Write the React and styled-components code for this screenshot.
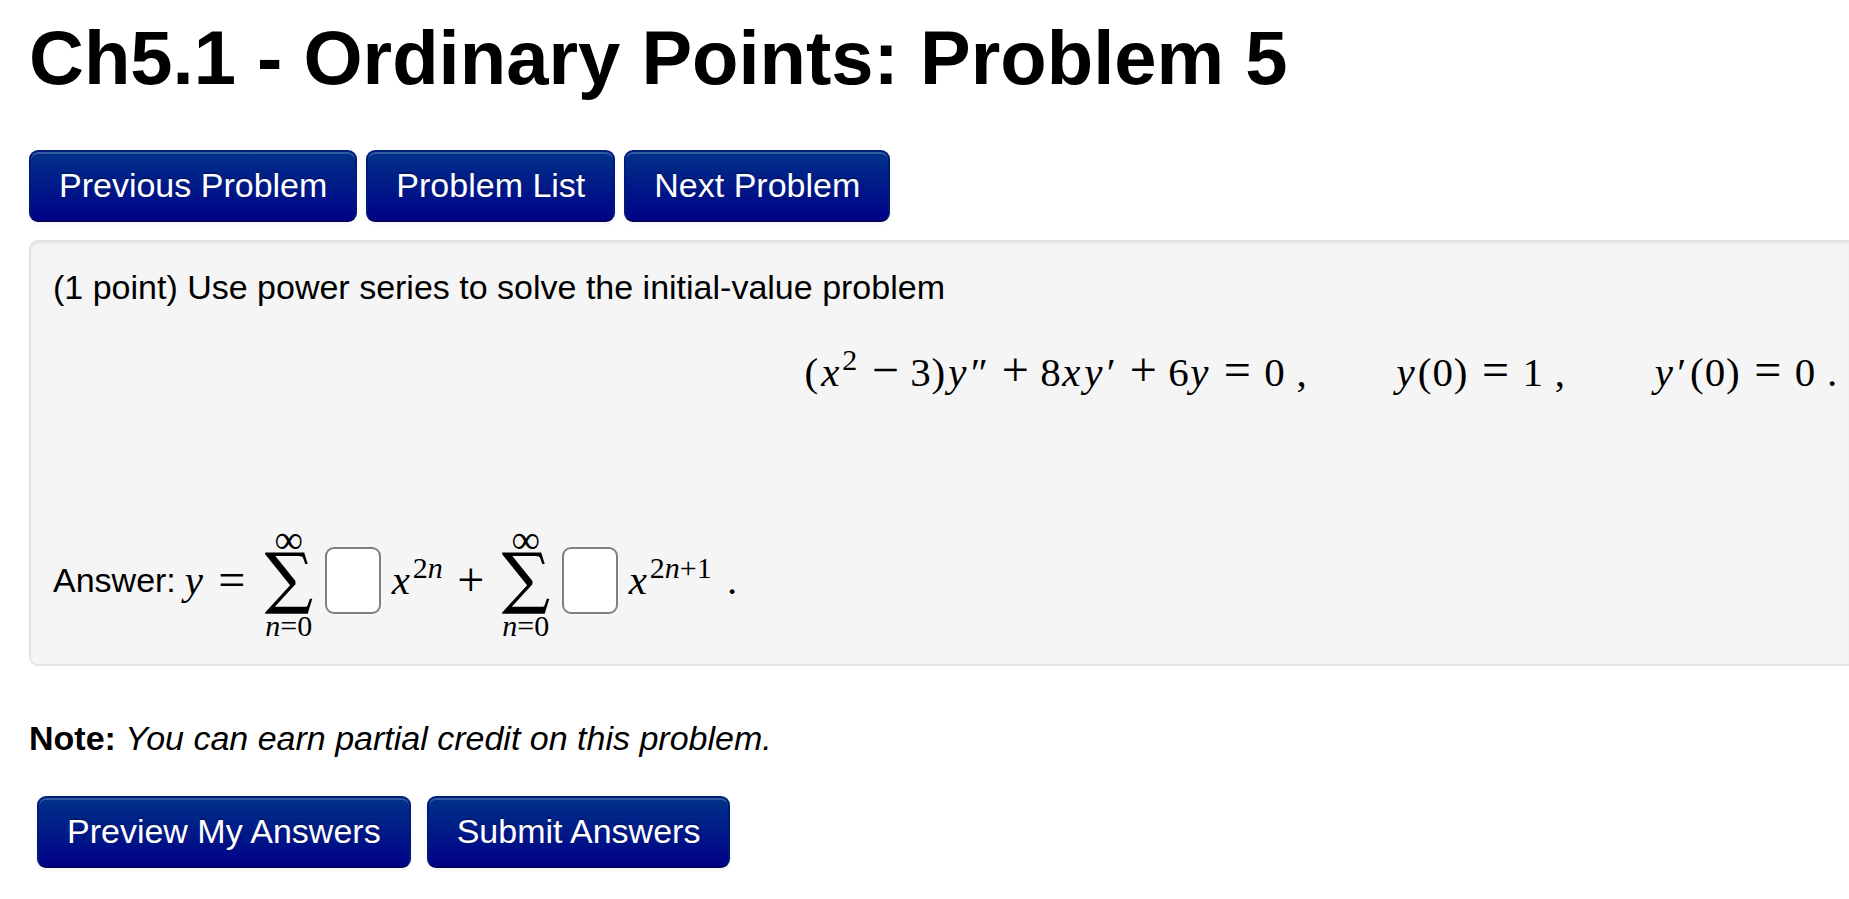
import React from "react";
import styled, { createGlobalStyle } from "styled-components";

const GlobalStyle = createGlobalStyle`
  * { box-sizing: border-box; }
  body {
    margin: 0;
    background: #fff;
    color: #000;
    font-family: "Liberation Sans", Arial, sans-serif;
    font-size: 34px;
    line-height: 48px;
    overflow-x: hidden;
  }
`;

const Page = styled.main`
  padding: 10px 0 32px 29px;
`;

const Title = styled.h1`
  margin: 0 0 44px;
  font-size: 76px;
  line-height: 96px;
  font-weight: 700;
`;

const ButtonRow = styled.div`
  display: flex;
  gap: ${(p) => p.$gap}px;
  padding-left: ${(p) => p.$indent || 0}px;
`;

const Button = styled.button`
  height: 72px;
  padding: 0 28px 2px;
  border: 2px solid;
  border-color: #00207c #001a78 #00005c;
  border-radius: 9px;
  background: linear-gradient(to bottom, #003388, #000088) border-box;
  box-shadow: inset 0 2px 0 rgba(255, 255, 255, 0.2), 0 2px 4px rgba(0, 0, 0, 0.05);
  color: #fff;
  font: inherit;
  text-shadow: 0 -2px 0 rgba(0, 0, 0, 0.25);
  white-space: nowrap;
`;

const Panel = styled.section`
  margin: 18px 0 48px;
  padding: 21px 10px 26px 22px;
  border: 2px solid #e3e3e3;
  border-right: 0;
  border-radius: 9px 0 0 9px;
  background: #f5f5f5;
  box-shadow: inset 0 2px 2px rgba(0, 0, 0, 0.05);
`;

const Text = styled.p`
  margin: 0;
`;

const MathRow = styled.div`
  display: flex;
  align-items: baseline;
  font-family: "Liberation Serif", "Times New Roman", serif;
  font-size: 41px;
  line-height: 48px;
  white-space: nowrap;
`;

const Equation = styled(MathRow)`
  justify-content: flex-end;
  margin: 35px 0 126px;
`;

const Group = styled.span`
  display: flex;
  align-items: baseline;
  margin-right: ${(p) => p.$after || 0}px;
`;

const widths = { digit: 20, paren: 16, variable: 22, mark: 14 };

const Sym = styled.span`
  display: inline-block;
  width: ${(p) => widths[p.$kind]}px;
  text-align: center;
  font-style: ${(p) => (p.$kind === "variable" ? "italic" : "normal")};
`;

const Operator = styled.span`
  width: 32px;
  margin: 0 ${(p) => (p.$rel ? 11 : 9)}px;
  text-align: center;
  font-size: 48px;
`;

const Sup = styled.sup`
  margin: 0 3px 0 1px;
  font-size: 30px;
  line-height: 24px;
  vertical-align: 16px;
`;

const Prime = styled.span`
  margin-right: 5px;
  font-style: italic;
`;

const AnswerRow = styled(MathRow)`
  align-items: center;
`;

const AnswerLabel = styled.label`
  margin-right: 7px;
  font-family: "Liberation Sans", Arial, sans-serif;
  font-size: 34px;
`;

const Sum = styled.span`
  display: flex;
  flex-direction: column;
  align-items: center;
  width: 60px;
  margin-right: 6px;
  padding-top: 8px;
`;

const Limit = styled.span`
  font-size: ${(p) => (p.$top ? 40 : 30)}px;
  line-height: ${(p) => (p.$top ? 20 : 24)}px;
`;

const SumSign = styled.span`
  font-family: "DejaVu Math TeX Gyre", "Liberation Serif", serif;
  font-size: 58px;
  line-height: 64px;
`;

const AnswerInput = styled.input`
  width: 56px;
  height: 67px;
  margin-right: 9px;
  padding: 4px 8px;
  border: 2px solid #808080;
  border-radius: 9px;
  background: #fff;
  font: 34px "Liberation Sans", Arial, sans-serif;
`;

const Note = styled(Text)`
  margin-bottom: 34px;
`;

const D = ({ children }) => <Sym $kind="digit">{children}</Sym>;
const P = ({ children }) => <Sym $kind="paren">{children}</Sym>;
const V = ({ children }) => <Sym $kind="variable">{children}</Sym>;
const M = ({ children }) => <Sym $kind="mark">{children}</Sym>;

const Power = ({ children }) => (
  <span>
    <V>x</V>
    <Sup>{children}</Sup>
  </span>
);

const Summation = () => (
  <Sum>
    <Limit $top>∞</Limit>
    <SumSign>∑</SumSign>
    <Limit><i>n</i>=0</Limit>
  </Sum>
);

export default function App() {
  return (
    <>
      <GlobalStyle />
      <Page>
        <Title>Ch5.1 - Ordinary Points: Problem 5</Title>
        <ButtonRow $gap={9}>
          <Button type="button">Previous Problem</Button>
          <Button type="button">Problem List</Button>
          <Button type="button">Next Problem</Button>
        </ButtonRow>
        <Panel>
          <Text>(1 point) Use power series to solve the initial-value problem</Text>
          <Equation>
            <Group $after={86}>
              <P>(</P><Power>2</Power>
              <Operator>−</Operator>
              <D>3</D><P>)</P><V>y</V><Prime>″</Prime>
              <Operator>+</Operator>
              <D>8</D><V>x</V><V>y</V><Prime>′</Prime>
              <Operator>+</Operator>
              <D>6</D><V>y</V>
              <Operator $rel>=</Operator>
              <D>0</D>&nbsp;<M>,</M>
            </Group>
            <Group $after={86}>
              <V>y</V><P>(</P><D>0</D><P>)</P>
              <Operator $rel>=</Operator>
              <D>1</D>&nbsp;<M>,</M>
            </Group>
            <Group>
              <V>y</V><Prime>′</Prime><P>(</P><D>0</D><P>)</P>
              <Operator $rel>=</Operator>
              <D>0</D>&nbsp;<M>.</M>
            </Group>
          </Equation>
          <AnswerRow>
            <AnswerLabel htmlFor="even">Answer:</AnswerLabel>
            <V>y</V>
            <Operator $rel>=</Operator>
            <Summation />
            <AnswerInput id="even" type="text" aria-label="Coefficient of the even powers" />
            <Power>2<i>n</i></Power>
            <Operator>+</Operator>
            <Summation />
            <AnswerInput id="odd" type="text" aria-label="Coefficient of the odd powers" />
            <Power>2<i>n</i>+1</Power>
            &nbsp;<M>.</M>
          </AnswerRow>
        </Panel>
        <Note><strong>Note:</strong> <em>You can earn partial credit on this problem.</em></Note>
        <ButtonRow $gap={16} $indent={8}>
          <Button type="button">Preview My Answers</Button>
          <Button type="submit">Submit Answers</Button>
        </ButtonRow>
      </Page>
    </>
  );
}
